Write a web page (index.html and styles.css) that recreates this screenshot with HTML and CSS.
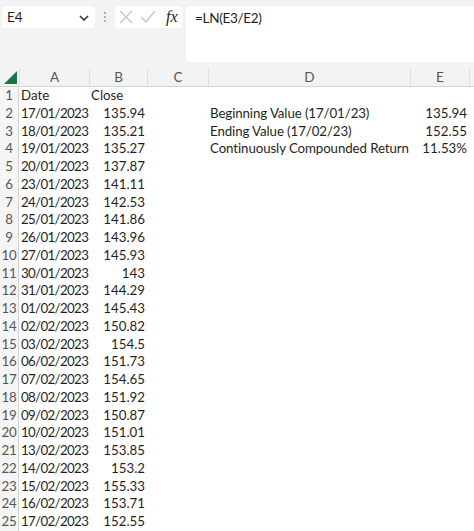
FILE: index.html
```html
<!DOCTYPE html>
<html>
<head>
<meta charset="utf-8">
<link rel="stylesheet" href="styles.css">
</head>
<body>
<div class="toolbar">
  <div class="namebox"><span>E4</span>
    <svg class="chev" width="10" height="6" viewBox="0 0 10 6"><path d="M1 1 L5 5 L9 1" fill="none" stroke="#333" stroke-width="1.6"/></svg>
  </div>
  <div class="dots"><i></i><i></i><i></i></div>
  <div class="fxbox">
    <svg width="14" height="14" viewBox="0 0 14 14"><path d="M1 1 L13 13 M13 1 L1 13" stroke="#c4c4c4" stroke-width="1.3" fill="none"/></svg>
    <svg width="16" height="14" viewBox="0 0 16 14"><path d="M1 7 L6 12 L15 1" stroke="#c4c4c4" stroke-width="1.3" fill="none"/></svg>
    <span class="fx">fx</span>
  </div>
  <div class="formula">=LN(E3/E2)</div>
</div>
<div class="sheet">
  <div class="row head">
    <div class="corner"><svg width="13" height="13" viewBox="0 0 13 13"><path d="M13 0 L13 13 L0 13 Z" fill="#217346"/></svg></div>
    <div class="ch">A</div><div class="ch">B</div><div class="ch">C</div><div class="ch">D</div><div class="ch">E</div><div class="ch last"></div>
  </div>
  <div class="row"><div class="rh">1</div><div class="c">Date</div><div class="c">Close</div><div class="c"></div><div class="c"></div><div class="c"></div><div class="c"></div></div>
  <div class="row"><div class="rh">2</div><div class="c dt">17/01/2023</div><div class="c n">135.94</div><div class="c"></div><div class="c lbl">Beginning Value (17/01/23)</div><div class="c n">135.94</div><div class="c"></div></div>
  <div class="row"><div class="rh">3</div><div class="c dt">18/01/2023</div><div class="c n">135.21</div><div class="c"></div><div class="c lbl">Ending Value (17/02/23)</div><div class="c n">152.55</div><div class="c"></div></div>
  <div class="row"><div class="rh">4</div><div class="c dt">19/01/2023</div><div class="c n">135.27</div><div class="c"></div><div class="c lbl">Continuously Compounded Return</div><div class="c n">11.53%</div><div class="c"></div></div>
  <div class="row"><div class="rh">5</div><div class="c dt">20/01/2023</div><div class="c n">137.87</div></div>
  <div class="row"><div class="rh">6</div><div class="c dt">23/01/2023</div><div class="c n">141.11</div></div>
  <div class="row"><div class="rh">7</div><div class="c dt">24/01/2023</div><div class="c n">142.53</div></div>
  <div class="row"><div class="rh">8</div><div class="c dt">25/01/2023</div><div class="c n">141.86</div></div>
  <div class="row"><div class="rh">9</div><div class="c dt">26/01/2023</div><div class="c n">143.96</div></div>
  <div class="row"><div class="rh">10</div><div class="c dt">27/01/2023</div><div class="c n">145.93</div></div>
  <div class="row"><div class="rh">11</div><div class="c dt">30/01/2023</div><div class="c n">143</div></div>
  <div class="row"><div class="rh">12</div><div class="c dt">31/01/2023</div><div class="c n">144.29</div></div>
  <div class="row"><div class="rh">13</div><div class="c dt">01/02/2023</div><div class="c n">145.43</div></div>
  <div class="row"><div class="rh">14</div><div class="c dt">02/02/2023</div><div class="c n">150.82</div></div>
  <div class="row"><div class="rh">15</div><div class="c dt">03/02/2023</div><div class="c n">154.5</div></div>
  <div class="row"><div class="rh">16</div><div class="c dt">06/02/2023</div><div class="c n">151.73</div></div>
  <div class="row"><div class="rh">17</div><div class="c dt">07/02/2023</div><div class="c n">154.65</div></div>
  <div class="row"><div class="rh">18</div><div class="c dt">08/02/2023</div><div class="c n">151.92</div></div>
  <div class="row"><div class="rh">19</div><div class="c dt">09/02/2023</div><div class="c n">150.87</div></div>
  <div class="row"><div class="rh">20</div><div class="c dt">10/02/2023</div><div class="c n">151.01</div></div>
  <div class="row"><div class="rh">21</div><div class="c dt">13/02/2023</div><div class="c n">153.85</div></div>
  <div class="row"><div class="rh">22</div><div class="c dt">14/02/2023</div><div class="c n">153.2</div></div>
  <div class="row"><div class="rh">23</div><div class="c dt">15/02/2023</div><div class="c n">155.33</div></div>
  <div class="row"><div class="rh">24</div><div class="c dt">16/02/2023</div><div class="c n">153.71</div></div>
  <div class="row"><div class="rh">25</div><div class="c dt">17/02/2023</div><div class="c n">152.55</div></div>
</div>
</body>
</html>
```
FILE: styles.css
```css
* { box-sizing: border-box; }
html, body { margin: 0; padding: 0; background: #fff; overflow: hidden; }
body { font-family: "Lato", "Open Sans", sans-serif; color: #1f1f1f; width: 474px; height: 531px; }

.toolbar {
  height: 69px;
  background: #f3f3f3;
  display: flex;
  align-items: flex-start;
  padding: 6px 0 0 2px;
}
.namebox {
  width: 93px; height: 22px;
  background: #fff;
  border-radius: 4px;
  display: flex; align-items: center; justify-content: space-between;
  padding: 0 6px 0 5px;
  font-size: 13.5px;
}
.chev { margin-top: 1px; }
.dots {
  width: 20px; height: 22px;
  display: flex; flex-direction: column; align-items: center; justify-content: center; gap: 2px;
}
.dots i { display: block; width: 2px; height: 2px; background: #9a9a9a; border-radius: 1px; }
.fxbox {
  width: 67px; height: 22px;
  background: #fff;
  border-radius: 4px;
  display: flex; align-items: center; gap: 7px;
  padding: 0 4px 0 4px;
}
.fx { font-family: "Liberation Serif", serif; font-style: italic; font-size: 16px; color: #222; margin-left: 3px; }
.formula {
  margin-left: 4px;
  flex: 1;
  height: 56px;
  background: #fff;
  border-radius: 4px 0 0 4px;
  padding: 4px 0 0 9px;
  font-size: 13.5px;
  letter-spacing: -0.3px;
}

.row {
  display: grid;
  grid-template-columns: 19px 70px 58px 61px 202px 59px 5px;
  height: 17.75px;
  font-size: 13.3px;
  line-height: 17.75px;
}
.row.head {
  height: 18px;
  background: #f3f3f3;
  border-bottom: 1px solid #d4d4d4;
  line-height: 17px;
  color: #555;
}
.corner { display: flex; align-items: flex-end; justify-content: flex-end; padding: 0 2px 2px 0; }
.ch { text-align: center; border-left: 1px solid #dedede; font-size: 13.5px; }
.ch.last { border-left: 1px solid #dedede; }
.rh {
  background: #f5f5f5;
  border-right: 1px solid #d4d4d4;
  color: #555;
  text-align: center;
  font-size: 13.3px;
  letter-spacing: -0.3px;
}
.c { padding: 0 2px; white-space: nowrap; overflow: visible; }
.dt { letter-spacing: -0.65px; }
.lbl { letter-spacing: -0.1px; }
.n { text-align: right; }
```
